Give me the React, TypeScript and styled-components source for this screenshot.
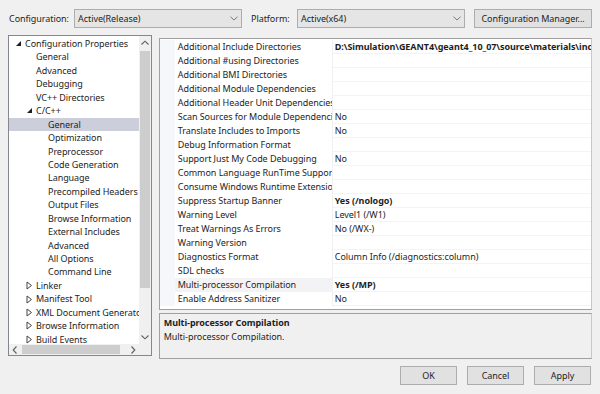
import React from 'react';
import styled, { createGlobalStyle } from 'styled-components';

const GlobalStyle = createGlobalStyle`
  html, body {
    margin: 0;
    padding: 0;
    background: #f0f0f0;
  }
  body {
    font-family: 'Noto Sans', 'Segoe UI', sans-serif;
    font-size: 9px;
    letter-spacing: -0.06px;
    color: #1e1e1e;
  }
`;

const Dialog = styled.div`
  width: 600px;
  height: 394px;
  box-sizing: border-box;
  padding: 8px 8px 0 8px;
  display: flex;
  flex-direction: column;
  overflow: hidden;
`;

const TopBar = styled.div`
  display: flex;
  align-items: center;
  height: 20px;
  padding-left: 1px;
`;

const Label = styled.span<{ $width: number }>`
  width: ${(p) => p.$width}px;
  white-space: nowrap;
`;

const Select = styled.div`
  width: 168px;
  height: 19px;
  box-sizing: border-box;
  border: 1px solid #adadad;
  background: #e5e5e5;
  display: flex;
  align-items: center;
  justify-content: space-between;
  padding: 0 3px 0 3px;
  margin-right: 9px;
`;

const Button = styled.button<{ $width: number }>`
  width: ${(p) => p.$width}px;
  height: 19px;
  box-sizing: border-box;
  border: 1px solid #adadad;
  background: #e1e1e1;
  font-family: inherit;
  font-size: 9px;
  letter-spacing: inherit;
  color: #1e1e1e;
  padding: 0;
  display: flex;
  align-items: center;
  justify-content: center;
`;

const Main = styled.div`
  display: flex;
  margin-top: 7px;
  gap: 7px;
`;

const Tree = styled.div`
  width: 144px;
  height: 321px;
  box-sizing: border-box;
  border: 1px solid #828790;
  background: #fff;
  display: grid;
  grid-template-columns: 1fr 12px;
  grid-template-rows: 1fr 11px;
`;

const TreeList = styled.div`
  overflow: hidden;
  padding-top: 1px;
`;

const TreeRow = styled.div<{ $level: number; $selected?: boolean }>`
  height: 13.45px;
  line-height: 13.45px;
  display: flex;
  align-items: center;
  white-space: nowrap;
  padding-left: ${(p) => [6, 17, 29][p.$level]}px;
  background: ${(p) => (p.$selected ? '#cccedb' : 'transparent')};
`;

const Expander = styled.span`
  width: 10px;
  display: inline-flex;
  align-items: center;
  justify-content: flex-start;
  flex: none;
`;

const Spacer = styled.span`
  width: 10px;
  flex: none;
`;

const VScroll = styled.div`
  background: #f0f0f0;
  display: flex;
  flex-direction: column;
  align-items: center;
`;

const ScrollArrow = styled.div`
  height: 14px;
  width: 12px;
  display: flex;
  align-items: center;
  justify-content: center;
  flex: none;
`;

const VThumb = styled.div`
  width: 10px;
  background: #cdcdcd;
  margin-top: 1px;
  height: 237px;
`;

const VTrack = styled.div`
  flex: 1;
`;

const HScroll = styled.div`
  background: #f0f0f0;
  display: flex;
  align-items: center;
`;

const HThumb = styled.div`
  width: 98px;
  height: 9px;
  background: #cdcdcd;
  margin-left: 1px;
`;

const Corner = styled.div`
  background: #f0f0f0;
`;

const RightCol = styled.div`
  display: flex;
  flex-direction: column;
  width: 434px;
  padding-top: 3px;
`;

const Grid = styled.div`
  height: 272px;
  box-sizing: border-box;
  border: 1px solid #a0a0a0;
  border-right-color: #c8c8c8;
  background: #fff;
  padding-top: 1px;
  display: grid;
  grid-template-columns: 15px 158px 1fr;
  grid-auto-rows: 14px;
  align-content: start;
`;

const Margin = styled.div`
  background: #f5f7fb;
`;

const NameCell = styled.div<{ $selected?: boolean }>`
  padding-left: 3px;
  white-space: nowrap;
  overflow: hidden;
  line-height: 14px;
  border-right: 1px solid #f0f0f0;
  background: ${(p) => (p.$selected ? '#f3f3f6' : '#fff')};
`;

const ValueCell = styled.div<{ $bold?: boolean }>`
  padding-left: 2px;
  white-space: nowrap;
  overflow: hidden;
  line-height: 13px;
  border-bottom: 1px solid #f4f4f4;
  font-weight: ${(p) => (p.$bold ? 700 : 400)};
`;

const Description = styled.div`
  margin-top: 3px;
  height: 46px;
  box-sizing: border-box;
  border: 1px solid #a0a0a0;
  border-right-color: #c8c8c8;
  padding: 2px 4px;
  line-height: 14px;
`;

const DescTitle = styled.div`
  font-weight: 700;
`;

const Footer = styled.div`
  display: flex;
  justify-content: flex-end;
  gap: 10px;
  margin-top: 7px;
  padding-right: 1px;
`;

const Chevron = ({ dir }: { dir: 'up' | 'down' | 'left' | 'right' }) => {
  const rot = { up: 180, down: 0, left: 90, right: -90 }[dir];
  return (
    <svg width="8" height="6" viewBox="0 0 8 6" style={{ transform: `rotate(${rot}deg)` }}>
      <path d="M0.5 1.5 L4 4.8 L7.5 1.5" fill="none" stroke="#606060" strokeWidth="1.1" />
    </svg>
  );
};

const SelectArrow = () => (
  <svg width="8" height="5" viewBox="0 0 8 5">
    <path d="M0.5 0.8 L4 4 L7.5 0.8" fill="none" stroke="#6d6d6d" strokeWidth="0.9" />
  </svg>
);

const Expanded = () => (
  <svg width="7" height="7" viewBox="0 0 7 7">
    <path d="M6 1 L6 6 L1 6 Z" fill="#1e1e1e" />
  </svg>
);

const Collapsed = () => (
  <svg width="7" height="9" viewBox="0 0 7 9">
    <path d="M1 1 L5.5 4.5 L1 8 Z" fill="none" stroke="#444" strokeWidth="1" />
  </svg>
);

type Node = { label: string; level: number; state?: 'open' | 'closed'; selected?: boolean };

const nodes: Node[] = [
  { label: 'Configuration Properties', level: 0, state: 'open' },
  { label: 'General', level: 1 },
  { label: 'Advanced', level: 1 },
  { label: 'Debugging', level: 1 },
  { label: 'VC++ Directories', level: 1 },
  { label: 'C/C++', level: 1, state: 'open' },
  { label: 'General', level: 2, selected: true },
  { label: 'Optimization', level: 2 },
  { label: 'Preprocessor', level: 2 },
  { label: 'Code Generation', level: 2 },
  { label: 'Language', level: 2 },
  { label: 'Precompiled Headers', level: 2 },
  { label: 'Output Files', level: 2 },
  { label: 'Browse Information', level: 2 },
  { label: 'External Includes', level: 2 },
  { label: 'Advanced', level: 2 },
  { label: 'All Options', level: 2 },
  { label: 'Command Line', level: 2 },
  { label: 'Linker', level: 1, state: 'closed' },
  { label: 'Manifest Tool', level: 1, state: 'closed' },
  { label: 'XML Document Generator', level: 1, state: 'closed' },
  { label: 'Browse Information', level: 1, state: 'closed' },
  { label: 'Build Events', level: 1, state: 'closed' },
  { label: 'Custom Build Step', level: 1, state: 'closed' },
];

type Prop = { name: string; value?: string; bold?: boolean; selected?: boolean };

const props: Prop[] = [
  { name: 'Additional Include Directories', value: 'D:\\Simulation\\GEANT4\\geant4_10_07\\source\\materials\\include;D:\\Simulation', bold: true },
  { name: 'Additional #using Directories' },
  { name: 'Additional BMI Directories' },
  { name: 'Additional Module Dependencies' },
  { name: 'Additional Header Unit Dependencies' },
  { name: 'Scan Sources for Module Dependencies', value: 'No' },
  { name: 'Translate Includes to Imports', value: 'No' },
  { name: 'Debug Information Format' },
  { name: 'Support Just My Code Debugging', value: 'No' },
  { name: 'Common Language RunTime Support' },
  { name: 'Consume Windows Runtime Extension' },
  { name: 'Suppress Startup Banner', value: 'Yes (/nologo)', bold: true },
  { name: 'Warning Level', value: 'Level1 (/W1)' },
  { name: 'Treat Warnings As Errors', value: 'No (/WX-)' },
  { name: 'Warning Version' },
  { name: 'Diagnostics Format', value: 'Column Info (/diagnostics:column)' },
  { name: 'SDL checks' },
  { name: 'Multi-processor Compilation', value: 'Yes (/MP)', bold: true, selected: true },
  { name: 'Enable Address Sanitizer', value: 'No' },
];

export default function App() {
  return (
    <>
      <GlobalStyle />
      <Dialog>
        <TopBar>
          <Label $width={65}>Configuration:</Label>
          <Select>
            <span>Active(Release)</span>
            <SelectArrow />
          </Select>
          <Label $width={46}>Platform:</Label>
          <Select>
            <span>Active(x64)</span>
            <SelectArrow />
          </Select>
          <Button $width={118}>Configuration Manager...</Button>
        </TopBar>
        <Main>
          <Tree>
            <TreeList>
              {nodes.map((n, i) => (
                <TreeRow key={i} $level={n.level} $selected={n.selected}>
                  {n.state === 'open' ? (
                    <Expander><Expanded /></Expander>
                  ) : n.state === 'closed' ? (
                    <Expander><Collapsed /></Expander>
                  ) : (
                    <Spacer />
                  )}
                  {n.label}
                </TreeRow>
              ))}
            </TreeList>
            <VScroll>
              <ScrollArrow><Chevron dir="up" /></ScrollArrow>
              <VThumb />
              <VTrack />
              <ScrollArrow><Chevron dir="down" /></ScrollArrow>
            </VScroll>
            <HScroll>
              <ScrollArrow><Chevron dir="left" /></ScrollArrow>
              <HThumb />
              <VTrack />
              <ScrollArrow><Chevron dir="right" /></ScrollArrow>
            </HScroll>
            <Corner />
          </Tree>
          <RightCol>
            <Grid>
              {props.map((p, i) => (
                <React.Fragment key={i}>
                  <Margin />
                  <NameCell $selected={p.selected}>{p.name}</NameCell>
                  <ValueCell $bold={p.bold}>{p.value ?? ''}</ValueCell>
                </React.Fragment>
              ))}
            </Grid>
            <Description>
              <DescTitle>Multi-processor Compilation</DescTitle>
              <div>Multi-processor Compilation.</div>
            </Description>
          </RightCol>
        </Main>
        <Footer>
          <Button $width={57}>OK</Button>
          <Button $width={57}>Cancel</Button>
          <Button $width={57}>Apply</Button>
        </Footer>
      </Dialog>
    </>
  );
}
